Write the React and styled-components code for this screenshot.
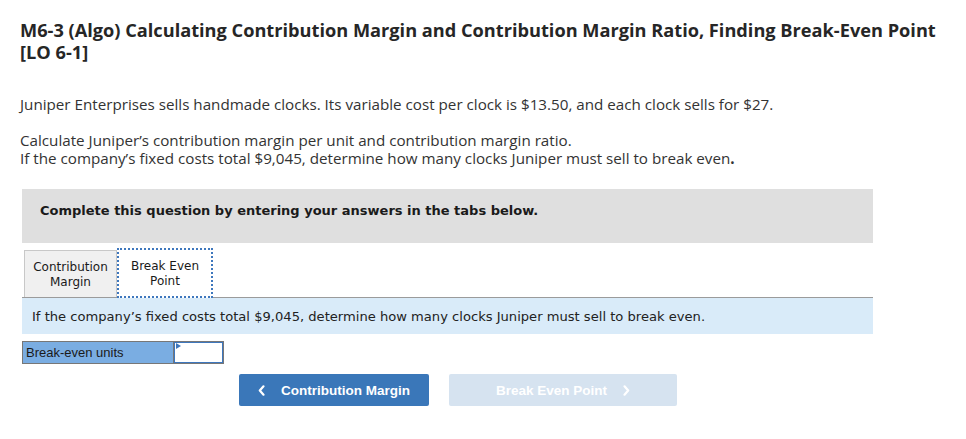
import React from "react";
import styled, { createGlobalStyle } from "styled-components";

const Global = createGlobalStyle`
  html, body { margin: 0; padding: 0; background: #fff; }
  body { font-family: "Open Sans", sans-serif; color: #2d2d2d; }
`;

const Page = styled.div`
  width: 966px;
  padding: 19px 0 0 20px;
  box-sizing: border-box;
`;

const Title = styled.h1`
  margin: 0;
  font-family: "Open Sans", sans-serif;
  font-weight: 700;
  font-size: 18.2px;
  line-height: 22px;
  color: #262626;
  width: 926px;
`;

const NoWrap = styled.span`
  white-space: nowrap;
`;

const Para = styled.p`
  margin: ${(p) => p.$mt || 0}px 0 0 0;
  font-family: "Open Sans", sans-serif;
  font-size: 15.2px;
  line-height: 18px;
  color: #333;
`;

const Work = styled.div`
  margin-top: 22px;
  margin-left: 2px;
  width: 851px;
`;

const Banner = styled.div`
  box-sizing: border-box;
  background: #dfdfdf;
  height: 54px;
  padding: 14px 0 0 18px;
  font-family: "DejaVu Sans", Verdana, sans-serif;
  font-weight: 700;
  font-size: 13px;
  line-height: 16px;
  color: #1a1a1a;
`;

const Tabs = styled.div`
  display: flex;
  align-items: flex-end;
  margin-top: 5px;
  padding-left: 2px;
  border-bottom: 1px solid #9b9b9b;
`;

const Tab = styled.div`
  box-sizing: border-box;
  display: flex;
  align-items: center;
  justify-content: center;
  text-align: center;
  font-family: "DejaVu Sans", Verdana, sans-serif;
  font-size: 12px;
  line-height: 15px;
  padding-top: 2px;
  color: #1a1a1a;
  width: ${(p) => (p.$active ? 96 : 93)}px;
  height: ${(p) => (p.$active ? 50 : 47)}px;
  background: ${(p) => (p.$active ? "#fff" : "#f0f0f0")};
  border: ${(p) => (p.$active ? "2px dotted #3e77bd" : "1px solid #c8c8c8")};
  border-bottom: ${(p) => (p.$active ? "2px dotted #3e77bd" : "none")};
  margin-bottom: ${(p) => (p.$active ? -1 : 0)}px;
`;

const Prompt = styled.div`
  background: #d9ebf9;
  height: 36px;
  display: flex;
  align-items: center;
  padding-left: 10px;
  font-family: "DejaVu Sans", Verdana, sans-serif;
  font-size: 13.1px;
  color: #222;
`;

const EntryRow = styled.div`
  display: flex;
  margin-top: 7px;
  height: 23px;
`;

const Label = styled.div`
  box-sizing: border-box;
  width: 151px;
  background: #7aade2;
  border: 1px solid #777;
  border-right: none;
  font-family: "Liberation Sans", Arial, sans-serif;
  font-size: 13px;
  color: #1a1a1a;
  display: flex;
  align-items: center;
  padding-left: 3px;
`;

const InputCell = styled.div`
  box-sizing: border-box;
  width: 51px;
  border: 1px solid #777;
  background: #3e77bd;
  padding: 1px;
  position: relative;
`;

const Input = styled.input`
  box-sizing: border-box;
  width: 100%;
  height: 100%;
  border: none;
  outline: none;
  background: #fff;
  margin: 0;
  padding: 0 3px;
  display: block;
`;

const Flag = styled.span`
  position: absolute;
  left: 2px;
  top: 1px;
  width: 0;
  height: 0;
  border-left: 5px solid #3e77bd;
  border-top: 3px solid transparent;
  border-bottom: 3px solid transparent;
`;

const Nav = styled.div`
  display: flex;
  gap: 20px;
  margin-top: 10px;
  padding-left: 217px;
`;

const NavButton = styled.button`
  box-sizing: border-box;
  height: 32px;
  width: ${(p) => p.$w}px;
  border: none;
  border-radius: 2px;
  background: ${(p) => (p.$disabled ? "#d6e3f0" : "#3a77b9")};
  color: #fff;
  font-family: "Liberation Sans", Arial, sans-serif;
  font-weight: 700;
  font-size: 13.5px;
  display: flex;
  align-items: center;
  justify-content: center;
  gap: 16px;
  padding: 0;
  cursor: ${(p) => (p.$disabled ? "default" : "pointer")};
`;

const Chevron = ({ dir }) => (
  <svg width="7" height="11" viewBox="0 0 7 11" fill="none">
    <path
      d={dir === "left" ? "M5.5 1.3L1.8 5.5l3.7 4.2" : "M1.5 1.3l3.7 4.2-3.7 4.2"}
      stroke="#fff"
      strokeWidth="2.2"
      strokeLinecap="round"
      strokeLinejoin="round"
    />
  </svg>
);

export default function App() {
  return (
    <>
      <Global />
      <Page>
        <Title>
          M6-3 (Algo) Calculating Contribution Margin and Contribution Margin Ratio, Finding Break-Even Point{" "}
          <NoWrap>[LO 6-1]</NoWrap>
        </Title>
        <Para $mt={32}>
          Juniper Enterprises sells handmade clocks. Its variable cost per clock is $13.50, and each clock sells for $27.
        </Para>
        <Para $mt={18}>
          Calculate Juniper’s contribution margin per unit and contribution margin ratio.
          <br />
          If the company’s fixed costs total $9,045, determine how many clocks Juniper must sell to break even<b>.</b>
        </Para>
        <Work>
          <Banner>Complete this question by entering your answers in the tabs below.</Banner>
          <Tabs>
            <Tab>
              Contribution
              <br />
              Margin
            </Tab>
            <Tab $active>
              Break Even
              <br />
              Point
            </Tab>
          </Tabs>
          <Prompt>
            If the company’s fixed costs total $9,045, determine how many clocks Juniper must sell to break even.
          </Prompt>
          <EntryRow>
            <Label>Break-even units</Label>
            <InputCell>
              <Input aria-label="Break-even units" />
              <Flag />
            </InputCell>
          </EntryRow>
          <Nav>
            <NavButton $w={190}>
              <Chevron dir="left" />
              Contribution Margin
            </NavButton>
            <NavButton $w={228} $disabled>
              Break Even Point
              <Chevron dir="right" />
            </NavButton>
          </Nav>
        </Work>
      </Page>
    </>
  );
}
